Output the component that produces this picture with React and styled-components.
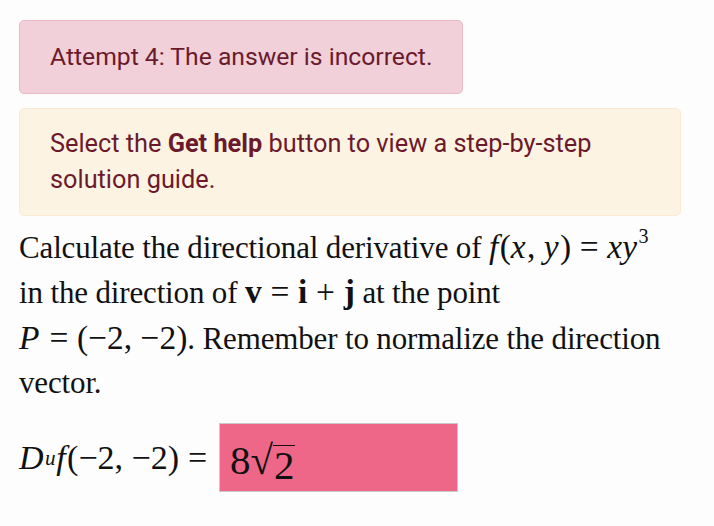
import React from "react";
import styled, { createGlobalStyle } from "styled-components";

const Global = createGlobalStyle`
  html, body { margin: 0; padding: 0; background: #fdfdfd; }
  body { font-family: "Roboto", "Liberation Sans", sans-serif; }
`;

const Page = styled.div`
  padding: 20px 33px 0 19px;
  display: flex;
  flex-direction: column;
  align-items: flex-start;
`;

const Alert = styled.div`
  box-sizing: border-box;
  border-radius: 5px;
  font-size: ${(p) => (p.$kind === "error" ? "24.7px" : "25.3px")};
  color: #6b1a2c;
  background: ${(p) => (p.$kind === "error" ? "#f1d0d9" : "#fdf3e2")};
  border: 1px solid ${(p) => (p.$kind === "error" ? "#eab8c6" : "#fbebd2")};
  padding: ${(p) => (p.$kind === "error" ? "20px 30px" : "17px 30px")};
  line-height: ${(p) => (p.$kind === "error" ? "32px" : "36px")};
  width: ${(p) => (p.$kind === "error" ? "auto" : "100%")};
  margin-bottom: 14px;
  b { font-weight: 700; }
`;

const Problem = styled.p`
  margin: -5px 0 0 0;
  font-family: "Liberation Serif", serif;
  font-size: 31px;
  line-height: 44.3px;
  color: #111;
  letter-spacing: -0.15px;
`;

const Math = styled.span`
  font-size: 1.08em;
  letter-spacing: 0;
`;

const MI = styled.span`
  font-style: italic;
  letter-spacing: 0;
  margin-right: 0.04em;
`;

const MB = styled.span`
  font-weight: 700;
  letter-spacing: 0;
`;

const Op = styled.span`
  margin: 0 0.26em;
  letter-spacing: 0;
`;

const Sup = styled.sup`
  font-size: 0.6em;
  line-height: 0;
  vertical-align: 0.75em;
`;

const AnswerRow = styled.div`
  display: flex;
  align-items: center;
  margin-top: 18px;
  font-family: "Liberation Serif", serif;
  font-size: 34px;
  color: #111;
`;

const Sub = styled.sub`
  font-size: 0.62em;
  vertical-align: -0.2em;
  line-height: 0;
`;

const AnswerBox = styled.div`
  box-sizing: border-box;
  width: 239px;
  height: 69px;
  margin-left: 3px;
  background: #ee6788;
  border: 1px solid #c9c9c9;
  padding: 12px 10px 0;
  font-family: "Liberation Serif", serif;
  font-size: 41px;
  color: #111;
  display: flex;
  align-items: flex-start;
`;

const Radical = styled.span`
  display: inline-flex;
  align-items: flex-end;
`;

const Radicand = styled.span`
  border-top: 1.5px solid #111;
  line-height: 38px;
  padding: 0 1px;
`;

export default function App() {
  return (
    <>
      <Global />
      <Page>
        <Alert $kind="error">Attempt 4: The answer is incorrect.</Alert>
        <Alert $kind="warn">
          Select the <b>Get help</b> button to view a step-by-step
          <br />
          solution guide.
        </Alert>
        <Problem>
          Calculate the directional derivative of{" "}
          <Math>
            <MI>f</MI>(<MI>x</MI>, <MI>y</MI>)<Op>=</Op>
            <MI>xy</MI>
            <Sup>3</Sup>
          </Math>
          <br />
          in the direction of{" "}
          <Math>
            <MB>v</MB>
            <Op>=</Op>
            <MB>i</MB>
            <Op>+</Op>
            <MB>j</MB>
          </Math>{" "}
          at the point
          <br />
          <Math>
            <MI>P</MI>
            <Op>=</Op>(−2, −2)
          </Math>
          . Remember to normalize the direction
          <br />
          vector.
        </Problem>
        <AnswerRow>
          <MI>D</MI>
          <Sub>
            <MI>u</MI>
          </Sub>
          <MI>f</MI>(−2, −2)<Op>=</Op>
          <AnswerBox>
            8
            <Radical>
              √<Radicand>2</Radicand>
            </Radical>
          </AnswerBox>
        </AnswerRow>
      </Page>
    </>
  );
}
